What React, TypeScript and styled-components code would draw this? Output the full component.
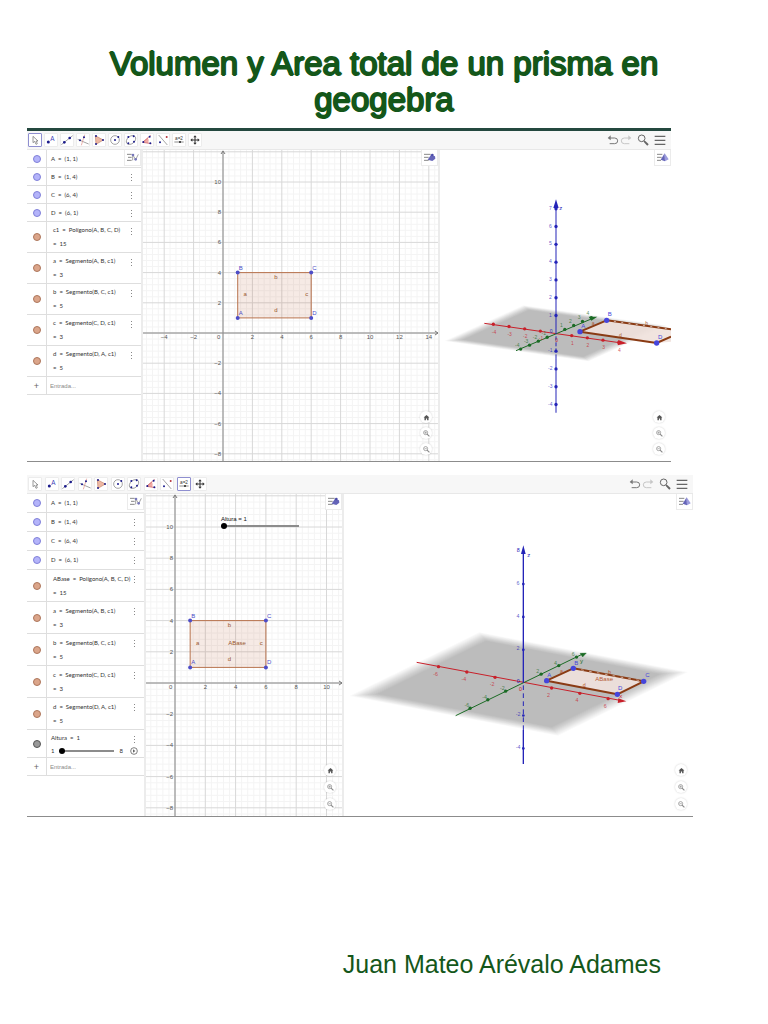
import React from "react";
import styled, { createGlobalStyle } from "styled-components";

const GlobalStyle = createGlobalStyle`
  *, *::before, *::after { box-sizing: border-box; }
  body { margin: 0; background: #fff; font-family: "Liberation Sans", Arial, sans-serif; }
  button, input { font: inherit; margin: 0; padding: 0; }
`;

const Page = styled.main`
  padding: 46px 75px 40px 27px;
`;

const Title = styled.h1`
  margin: 0 -48px 10px 0;
  padding: 0 48px;
  color: #14571a;
  font-size: 33px;
  font-weight: 400;
  line-height: 36px;
  text-align: center;
  text-shadow: 1px 0 #14571a, -1px 0 #14571a, 0 1px #14571a, 0 -1px #14571a;
`;

const Author = styled.p`
  margin: 132px 32px 0 0;
  color: #14571a;
  font-size: 25px;
  line-height: 30px;
  text-align: right;
`;

const Window = styled.section<{ $first?: boolean }>`
  margin: ${(p) => (p.$first ? "0 22px 13px 0" : "0")};
  border-top: ${(p) => (p.$first ? "3px solid #24483f" : "0")};
  border-bottom: 1px solid #8c8c8c;
`;

const Toolbar = styled.header`
  display: flex;
  justify-content: space-between;
  align-items: center;
  height: 19px;
  padding: 0 5px 0 1px;
  background: #f7f7f7;
  border-bottom: 1px solid #e8e8e8;
`;

const Tools = styled.div<{ $width: number }>`
  display: flex;
  justify-content: space-between;
  width: ${(p) => p.$width}px;
`;

const ToolButton = styled.button<{ $active?: boolean }>`
  display: flex;
  width: 14px;
  height: 14px;
  background: #fff;
  border: 1px solid ${(p) => (p.$active ? "#8f8fd0" : "#ececec")};
  border-radius: 1px;
  svg { display: block; width: 12px; height: 12px; overflow: visible; }
`;

const Actions = styled.div`
  display: flex;
  align-items: center;
  gap: 5px;
`;

const History = styled.div`
  display: flex;
  gap: 1px;
`;

const ActionButton = styled.button`
  display: flex;
  width: 12px;
  height: 12px;
  border: 0;
  background: none;
  svg { display: block; width: 12px; height: 12px; }
`;

const Views = styled.div<{ $cols: string; $height: number }>`
  display: grid;
  grid-template-columns: ${(p) => p.$cols};
  column-gap: 2px;
  min-height: ${(p) => p.$height}px;
  background: #ececec;
`;

const Algebra = styled.div`
  position: relative;
  background: #fff;
`;

const List = styled.ul`
  margin: 0;
  padding: 0;
  list-style: none;
`;

const Row = styled.li<{ $height: number }>`
  display: grid;
  grid-template-columns: 20px minmax(0, 1fr) 12px;
  height: ${(p) => p.$height}px;
  border-bottom: 1px solid #dedede;
`;

const Marker = styled.div`
  display: flex;
  align-items: center;
  justify-content: center;
  border-right: 1px solid #dedede;
  color: #666;
  font-size: 9px;
`;

const Visibility = styled.input<{ $fill: string; $line: string }>`
  appearance: none;
  width: 8px;
  height: 8px;
  border: 1px solid ${(p) => p.$line};
  border-radius: 50%;
  background: ${(p) => p.$fill};
`;

const Expression = styled.div<{ $indent?: boolean }>`
  display: flex;
  flex-direction: column;
  justify-content: center;
  padding-left: ${(p) => (p.$indent ? 6 : 4)}px;
  color: #333;
  font-family: Lato, "Liberation Sans", sans-serif;
  font-size: 6px;
  line-height: 14px;
  white-space: nowrap;
`;

const Formula = styled.span`
  display: flex;
  gap: 3px;
`;

const More = styled.button`
  align-self: start;
  width: 6px;
  height: 16px;
  border: 0;
  background: none;
  svg { display: block; width: 6px; height: 16px; }
`;

const Entry = styled.input`
  width: 100%;
  padding-left: 3px;
  border: 0;
  outline: 0;
  background: none;
  font-size: 6px;
  &::placeholder { color: #8a8a8a; opacity: 1; }
`;

const SliderLine = styled.div`
  display: flex;
  align-items: center;
  gap: 5px;
  height: 12px;
  margin-right: -10px;
  font-size: 6px;
`;

const Slider = styled.input<{ $width: number }>`
  appearance: none;
  display: block;
  width: ${(p) => p.$width}px;
  height: 6px;
  background: linear-gradient(#8c8c8c, #8c8c8c) center / 100% 2px no-repeat;
  &::-webkit-slider-thumb {
    appearance: none;
    width: 6px;
    height: 6px;
    border-radius: 50%;
    background: #000;
  }
`;

const Play = styled.button`
  display: flex;
  width: 8px;
  height: 8px;
  margin-left: 2px;
  border: 0;
  background: none;
  svg { width: 8px; height: 8px; }
`;

const View = styled.div`
  position: relative;
  overflow: hidden;
  background: #fff;
  > svg { display: block; width: 100%; height: 100%; }
`;

const StyleToggle = styled.button`
  position: absolute;
  top: 0;
  right: 0;
  display: flex;
  width: 17px;
  height: 16px;
  border: 1px solid #ebebeb;
  border-top: 0;
  background: #fff;
  svg { width: 15px; height: 15px; }
`;

const ZoomStack = styled.div<{ $gap: number }>`
  position: absolute;
  right: 6px;
  bottom: 6px;
  display: flex;
  flex-direction: column;
  gap: ${(p) => p.$gap}px;
`;

const ZoomButton = styled.button`
  display: flex;
  align-items: center;
  justify-content: center;
  width: 12px;
  height: 12px;
  border: 0;
  border-radius: 50%;
  background: #fff;
  box-shadow: 0 0 2px rgba(0, 0, 0, 0.2);
  svg { width: 7px; height: 7px; }
`;

const CanvasSlider = styled.label`
  position: absolute;
  top: 21px;
  left: 75px;
  display: block;
  color: #111;
  font-size: 6px;
  line-height: 8px;
`;

const NAVY = "#1c1c8c";

const Dot = ({ x, y, c = NAVY, r = 3 }: { x: number; y: number; c?: string; r?: number }) => (
  <circle cx={x} cy={y} r={r} fill={c} />
);

const tools: { name: string; art: React.ReactNode }[] = [
  { name: "Elige y mueve", art: <path d="M-6-11V8l5-4 4 9 4-2-4-8h6z" fill="#fff" stroke="#666" strokeWidth="2" /> },
  {
    name: "Punto",
    art: (
      <>
        <Dot x={-8} y={6} r={4.5} />
        <text x="-2" y="3" fontSize="19" fill="#3a3ab8">A</text>
      </>
    ),
  },
  {
    name: "Recta",
    art: (
      <>
        <path d="M-17 14L17-13" stroke="#777" strokeWidth="2" />
        <Dot x={-8} y={7} r={4} />
        <Dot x={8} y={-6} r={4} />
      </>
    ),
  },
  {
    name: "Perpendicular",
    art: (
      <>
        <path d="M-16-2L17 12" stroke="#777" strokeWidth="2" />
        <path d="M5-16L-5 16" stroke="#df8b84" strokeWidth="2" />
        <Dot x={-9} y={1} />
        <Dot x={3} y={-8} />
      </>
    ),
  },
  {
    name: "Polígono",
    art: (
      <>
        <path d="M-11-13L13 0-9 13z" fill="#edb8a4" stroke="#c48468" strokeWidth="2" />
        <Dot x={-9} y={-12} />
        <Dot x={12} y={0} />
        <Dot x={-9} y={12} />
      </>
    ),
  },
  {
    name: "Circunferencia",
    art: (
      <>
        <circle r="13" fill="none" stroke="#777" strokeWidth="2" />
        <Dot x={0} y={0} />
        <Dot x={10} y={-9} />
      </>
    ),
  },
  {
    name: "Elipse",
    art: (
      <>
        <ellipse rx="16" ry="11" transform="rotate(-40)" fill="none" stroke="#777" strokeWidth="2" />
        <Dot x={-8} y={-9} />
        <Dot x={8} y={-11} />
        <Dot x={-8} y={10} />
        <Dot x={9} y={5} />
      </>
    ),
  },
  {
    name: "Ángulo",
    art: (
      <>
        <path d="M-12 6L2-7Q8 0 4 9z" fill="#f0aaa5" />
        <path d="M11-14L-13 7 13 11" fill="none" stroke="#c33f45" strokeWidth="2" />
        <Dot x={8} y={-10} />
        <Dot x={-11} y={6} />
        <Dot x={10} y={10} />
      </>
    ),
  },
  {
    name: "Simetría",
    art: (
      <>
        <path d="M-13-15L13 15" stroke="#777" strokeWidth="2" />
        <Dot x={11} y={-9} c="#b5333a" />
        <Dot x={-9} y={7} />
      </>
    ),
  },
  {
    name: "Deslizador",
    art: (
      <>
        <text x="0" y="-1" textAnchor="middle" fontSize="14" fill="#333">a=2</text>
        <path d="M-14 6H14" stroke="#555" strokeWidth="2" />
        <Dot x={3} y={6} c="#222" />
      </>
    ),
  },
  {
    name: "Desplaza vista",
    art: (
      <g fill="#333">
        <path d="M-10-1.5H10V1.5H-10zM-1.5-10H1.5V10H-1.5z" />
        <path d="M0-14l5 6h-10zM0 14l5-6h-10zM-14 0l6-5v10zM14 0l-6-5v10z" />
      </g>
    ),
  },
];

const MagnifierIcon = ({ sign = "" }: { sign?: string }) => (
  <svg viewBox="0 0 24 24" fill="none" stroke="#888" strokeWidth="2.5">
    <circle cx="9" cy="9" r="7" />
    <path d="M14 14l8 8" strokeWidth="4" />
    {sign && <path d={sign} strokeWidth="2" />}
  </svg>
);

function AppToolbar({ active, width }: { active: number; width: number }) {
  return (
    <Toolbar>
      <Tools $width={width}>
        {tools.map((t, i) => (
          <ToolButton key={t.name} aria-label={t.name} $active={i === active}>
            <svg viewBox="-18 -18 36 36">{t.art}</svg>
          </ToolButton>
        ))}
      </Tools>
      <Actions>
        <History>
          <ActionButton aria-label="Deshacer">
            <svg viewBox="0 0 36 36" fill="none" stroke="#777" strokeWidth="3">
              <path d="M6 12H23q9 0 9 8.500t-9 8.500H8" />
              <path d="M11 4L2 12l9 7z" fill="#777" stroke="none" />
            </svg>
          </ActionButton>
          <ActionButton aria-label="Rehacer">
            <svg viewBox="0 0 36 36" fill="none" stroke="#c6c6c6" strokeWidth="3">
              <path d="M30 12H13q-9 0-9 8.500t9 8.500H28" />
              <path d="M25 4l9 8-9 7z" fill="#c6c6c6" stroke="none" />
            </svg>
          </ActionButton>
        </History>
        <ActionButton aria-label="Buscar">
          <svg viewBox="0 0 36 36" fill="none" stroke="#666">
            <circle cx="14" cy="13" r="10" strokeWidth="3" />
            <path d="M20 20l4 4" strokeWidth="3" />
            <path d="M23 23l10 10" strokeWidth="6" />
          </svg>
        </ActionButton>
        <ActionButton aria-label="Menú">
          <svg viewBox="0 0 36 36" stroke="#666" strokeWidth="4">
            <path d="M2 7H34M2 19H34M2 31H34" />
          </svg>
        </ActionButton>
      </Actions>
    </Toolbar>
  );
}

const toggleArt: Record<string, React.ReactNode> = {
  algebra: (
    <>
      <path d="M6 13H20M9 22H20M6 31H20" stroke="#888" strokeWidth="3" />
      <path d="M23 31V14l9 15L40 13" fill="none" stroke="#777" strokeWidth="2" />
      <Dot x={24} y={15} c="#7777bb" r={4} />
      <Dot x={32} y={28} c="#7777bb" r={4} />
    </>
  ),
  plane: (
    <>
      <path d="M6 13H26M6 22H20M6 31H20" stroke="#888" strokeWidth="3" />
      <path d="M17 29l10-15 12 5 1 7-9 7z" fill="#6464b8" />
      <Dot x={31} y={15} c="#4a4aa8" r={4} />
    </>
  ),
  space: (
    <>
      <path d="M6 13H22M6 22H20M6 31H18" stroke="#888" strokeWidth="3" />
      <path d="M29 10L17 29l13 5z" fill="#6464b8" />
      <path d="M29 10l12 18-11 6z" fill="#9c9cdd" />
    </>
  ),
};

const Toggle = ({ kind }: { kind: string }) => (
  <StyleToggle aria-label="Barra de estilo">
    <svg viewBox="0 0 45 45">{toggleArt[kind]}</svg>
  </StyleToggle>
);

const Zooms = ({ gap }: { gap: number }) => (
  <ZoomStack $gap={gap}>
    <ZoomButton aria-label="Vista estándar">
      <svg viewBox="0 0 24 24" fill="#555">
        <path d="M12 3L2 12h3v9h5v-6h4v6h5v-9h3z" />
      </svg>
    </ZoomButton>
    <ZoomButton aria-label="Acercar">
      <MagnifierIcon sign="M5 9H13M9 5V13" />
    </ZoomButton>
    <ZoomButton aria-label="Alejar">
      <MagnifierIcon sign="M5 9H13" />
    </ZoomButton>
  </ZoomStack>
);

const MoreButton = ({ name }: { name: string }) => (
  <More aria-label={`Opciones de ${name}`}>
    <svg viewBox="0 0 6 16" fill="#888">
      <path d="M2 6h1v1H2zM2 9h1v1H2zM2 12h1v1H2z" />
    </svg>
  </More>
);

const Equation = ({ left, right }: { left?: string; right: string | number }) => (
  <Formula>
    {left && <span>{left}</span>}
    <span>=</span>
    <span>{right}</span>
  </Formula>
);

interface AlgebraProps {
  base: string;
  pointHeight: number;
  commandHeight: number;
  slider?: boolean;
}

const points = [["A", "(1, 1)"], ["B", "(1, 4)"], ["C", "(6, 4)"], ["D", "(6, 1)"]];
const segments = [["a", "A, B", 3], ["b", "B, C", 5], ["c", "C, D", 3], ["d", "D, A", 5]];

function AlgebraView({ base, pointHeight, commandHeight, slider }: AlgebraProps) {
  const commands = [
    { name: base, text: "Polígono(A, B, C, D)", value: 15 },
    ...segments.map(([n, pts, v]) => ({ name: String(n), text: `Segmento(${pts}, c1)`, value: Number(v) })),
  ];
  return (
    <Algebra>
      <List>
        {points.map(([name, value], i) => (
          <Row key={name} $height={pointHeight}>
            <Marker>
              <Visibility type="checkbox" defaultChecked aria-label={`Mostrar ${name}`} $fill="#b4b4fa" $line="#8080d8" />
            </Marker>
            <Expression>
              <Equation left={name} right={value} />
            </Expression>
            {i > 0 && <MoreButton name={name} />}
          </Row>
        ))}
        {commands.map((c) => (
          <Row key={c.name} $height={commandHeight}>
            <Marker>
              <Visibility type="checkbox" defaultChecked aria-label={`Mostrar ${c.name}`} $fill="#dba58a" $line="#ad765c" />
            </Marker>
            <Expression $indent>
              <Equation left={c.name} right={c.text} />
              <Equation right={c.value} />
            </Expression>
            <MoreButton name={c.name} />
          </Row>
        ))}
        {slider && (
          <Row $height={28}>
            <Marker>
              <Visibility type="checkbox" defaultChecked aria-label="Mostrar Altura" $fill="#999" $line="#555" />
            </Marker>
            <Expression>
              <Equation left="Altura" right={1} />
              <SliderLine>
                <span>1</span>
                <Slider $width={55} type="range" min={1} max={8} defaultValue={1} aria-label="Altura" />
                <span>8</span>
                <Play aria-label="Reproducir">
                  <svg viewBox="0 0 24 24" fill="none" stroke="#666" strokeWidth="2.5">
                    <circle cx="12" cy="12" r="10" />
                    <path d="M9 7v10l7-5z" fill="#666" stroke="none" />
                  </svg>
                </Play>
              </SliderLine>
            </Expression>
            <MoreButton name="Altura" />
          </Row>
        )}
        <Row $height={18}>
          <Marker>+</Marker>
          <Entry placeholder="Entrada..." aria-label="Entrada" />
        </Row>
      </List>
      <Toggle kind="algebra" />
    </Algebra>
  );
}

interface PlaneProps {
  width: number;
  height: number;
  ox: number;
  oy: number;
  ux: number;
  uy: number;
  xs: number[];
  ys: number[];
  name?: string;
}

function PlaneChart({ width, height, ox, oy, ux, uy, xs, ys, name }: PlaneProps) {
  const X = (v: number) => ox + v * ux;
  const Y = (v: number) => oy - v * uy;
  const lines = (step: number, skip: boolean) => {
    let d = "";
    for (let i = -60; i <= 60; i++) {
      if (skip && i % 5 === 0) continue;
      const x = X(i * step);
      const y = Y(i * step);
      if (x > 0 && x < width) d += `M${x} 0V${height}`;
      if (y > 0 && y < height) d += `M0 ${y}H${width}`;
    }
    return d;
  };
  return (
    <svg viewBox={`0 0 ${width} ${height}`} preserveAspectRatio="xMinYMin slice" fontSize="6">
      <path d={lines(0.4, true)} stroke="#f4f4f4" />
      <path d={lines(2, false)} stroke="#d8d8d8" />
      <path d={`M0 ${oy}H${width}M${ox} ${height}V2`} stroke="#8c8c8c" />
      <path d={`M${width - 3} ${oy - 2}l3 2-3 2M${ox - 2} 4l2-3 2 3`} fill="none" stroke="#777" />
      <g fill="#555">
        {xs.map((v) => (
          <text key={v} x={X(v)} y={oy + 6} textAnchor="middle">{v < 0 ? `−${-v}` : v}</text>
        ))}
        {ys.map((v) => (
          <text key={v} x={ox - 2} y={Y(v) + 2} textAnchor="end">{v < 0 ? `−${-v}` : v}</text>
        ))}
        <text x={ox - 6} y={oy + 6}>0</text>
      </g>
      <rect x={X(1)} y={Y(4)} width={5 * ux} height={3 * uy} fill="#b5532a" fillOpacity="0.12" stroke="#b9744f" />
      <g fill="#99582f" textAnchor="middle">
        <text x={X(3.6)} y={Y(4) + 6}>b</text>
        <text x={X(3.6)} y={Y(1) - 6}>d</text>
        <text x={X(1.5)} y={Y(2.5) + 1}>a</text>
        <text x={X(5.7)} y={Y(2.5) + 1}>c</text>
        {name && <text x={X(4.1)} y={Y(2.5) + 1}>{name}</text>}
      </g>
      <g fill="#4d4dc8">
        {[["A", 1, 1], ["B", 1, 4], ["C", 6, 4], ["D", 6, 1]].map(([n, x, y]) => (
          <g key={n}>
            <circle cx={X(+x)} cy={Y(+y)} r="2" />
            <text x={X(+x) + 1} y={Y(+y) - 3}>{n}</text>
          </g>
        ))}
      </g>
    </svg>
  );
}

type P = [number, number];

/* Ground plane whose edges fade out: nested translucent copies, each a little smaller. */
function Ground({ corners, center }: { corners: P[]; center: P }) {
  return (
    <g fill="#000" fillOpacity="0.024">
      {Array.from({ length: 12 }, (_, i) => {
        const k = 1 - i * 0.015;
        const pts = corners.map(([x, y]) => [center[0] + (x - center[0]) * k, center[1] + (y - center[1]) * k].join());
        return <polygon key={i} points={pts.join(" ")} />;
      })}
    </g>
  );
}

interface Tick { x: number; y: number; t: string; }

function Ticks({ items, color, dx, dy, r = 5 }: { items: Tick[]; color: string; dx: number; dy: number; r?: number }) {
  return (
    <g fill={color}>
      {items.map((k) => (
        <g key={k.t + k.x + k.y}>
          <circle cx={k.x} cy={k.y} r={r} />
          <text x={k.x + dx} y={k.y + dy} textAnchor="middle" fillOpacity="0.75">{k.t}</text>
        </g>
      ))}
    </g>
  );
}

const ticks = (origin: P, step: P, values: number[]): Tick[] =>
  values.map((v) => ({ x: origin[0] + step[0] * v, y: origin[1] + step[1] * v, t: String(v) }));

const RED = "#c8202a";
const GREEN = "#1b6b25";
const BLUE = "#2424b8";
const BROWN = "#8a3b14";

function SpaceOne() {
  const o: P = [348, 640];
  return (
    <svg viewBox="0 90 693 933" preserveAspectRatio="xMidYMin slice" fontSize="15">
      <Ground center={o} corners={[[13, 663], [250, 556], [683, 617], [446, 724]]} />
      <polygon points="420,635 500,601 860,652 650,669" fill="#efe1dc" fillOpacity="0.9" />
      <path d="M133 610L545 669" stroke={RED} strokeWidth="3" />
      <path d="M535 660l26 10-28 6z" fill={RED} />
      <path d="M228 692L456 596" stroke={GREEN} strokeWidth="3" />
      <path d="M446 590l26 0-18 12z" fill={GREEN} />
      <path d="M348 878V715M348 640V256" stroke={BLUE} strokeWidth="4" strokeOpacity="0.75" />
      <path d="M348 715V640" stroke={BLUE} strokeWidth="3" strokeDasharray="12 6" />
      <path d="M340 264l8-26 8 26z" fill={BLUE} />
      <Ticks items={ticks(o, [47, 6.8], [-4, -3, -2, -1, 1, 2, 3, 4])} color={RED} dx={2} dy={28} />
      <Ticks items={ticks(o, [26.5, -11.8], [-4, -3, -2, -1, 1, 2, 3, 4])} color={GREEN} dx={-10} dy={-7} />
      <Ticks items={ticks(o, [0, -53.4], [-4, -3, -2, -1, 1, 2, 3, 4, 5, 6, 7])} color={BLUE} dx={-17} dy={3} />
      <text x="329" y="640" fill={BLUE}>0</text>
      <text x="346" y="666" fill={RED}>0</text>
      <text x="358" y="271" fontSize="18" fill={BLUE}>z</text>
      <path d="M693 650L650 669 420 635 500 601 693 628" fill="none" stroke={BROWN} strokeWidth="6" strokeLinejoin="round" />
      <path d="M500 601L693 628" stroke="#efe1dc" strokeWidth="2" strokeDasharray="6 16" />
      <g fill="#a85a34">
        <text x="616" y="616">b</text>
        <text x="537" y="650">d</text>
        <text x="455" y="616">a</text>
      </g>
      <g fill="#4545dc" fontSize="18">
        <circle cx="420" cy="635" r="8" />
        <circle cx="500" cy="601" r="8" />
        <circle cx="650" cy="669" r="8" />
        <text x="424" y="624">A</text>
        <text x="503" y="589">B</text>
        <text x="654" y="657">D</text>
      </g>
    </svg>
  );
}

function SpaceTwo() {
  const o: P = [550, 638];
  return (
    <svg viewBox="12 72 1047 966" preserveAspectRatio="xMidYMin slice" fontSize="16">
      <Ground center={[536, 642]} corners={[[28, 678], [418, 487], [1044, 606], [654, 797]]} />
      <polygon points="620,632 700,595 911,634 832,673" fill="#efe1dc" fillOpacity="0.92" />
      <path d="M230 577L840 691" stroke={RED} strokeWidth="3" />
      <path d="M835 685l24 9-26 5z" fill={RED} />
      <path d="M347 737L728 552" stroke={GREEN} strokeWidth="3" />
      <path d="M720 550l19-1-11 12z" fill={GREEN} stroke={GREEN} />
      <path d="M550 882V780M550 638V250" stroke={BLUE} strokeWidth="4" />
      <path d="M550 780V638" stroke={BLUE} strokeWidth="3" strokeDasharray="14 10" />
      <path d="M543 252l7-26 7 26z" fill={BLUE} />
      <Ticks items={ticks(o, [42.4, 8], [-6, -4, -2, 2, 4, 6])} color={RED} dx={-9} dy={27} />
      <Ticks items={ticks(o, [26.6, -12.8], [-6, -4, -2, 2, 4, 6])} color={GREEN} dx={-10} dy={-3} />
      <Ticks items={ticks(o, [0, -49.3], [-4, -2, 2, 4, 6])} color={BLUE} dx={-16} dy={2} r={4} />
      <text x="530" y="245" fill={BLUE}>8</text>
      <text x="530" y="638" fill={BLUE}>0</text>
      <text x="537" y="662" fill={RED}>0</text>
      <text x="562" y="262" fontSize="18" fill={BLUE}>z</text>
      <text x="720" y="579" fontSize="18" fill={GREEN}>y</text>
      <text x="838" y="684" fontSize="18" fill={RED}>x</text>
      <path d="M620 632L700 595 911 634 832 673z" fill="none" stroke={BROWN} strokeWidth="6" strokeLinejoin="round" />
      <path d="M700 595L911 634" stroke="#efe1dc" strokeWidth="2" strokeDasharray="8 16" />
      <g fill="#b55a34">
        <text x="766" y="634" fontSize="18">ABase</text>
        <text x="804" y="611">b</text>
        <text x="728" y="650">d</text>
        <text x="660" y="610">a</text>
      </g>
      <g fill="#4545dc" fontSize="18">
        <circle cx="620" cy="632" r="8" />
        <circle cx="700" cy="595" r="8" />
        <circle cx="911" cy="634" r="8" />
        <circle cx="832" cy="673" r="8" />
        <text x="622" y="620">A</text>
        <text x="703" y="585">B</text>
        <text x="916" y="622">C</text>
        <text x="834" y="660">D</text>
      </g>
    </svg>
  );
}

export default function App() {
  return (
    <>
      <GlobalStyle />
      <Page>
        <Title>Volumen y Area total de un prisma en geogebra</Title>

        <Window $first aria-label="Polígono base">
          <AppToolbar active={0} width={174} />
          <Views $cols="114px minmax(0, 295fr) minmax(0, 231fr)" $height={311}>
            <AlgebraView base="c1" pointHeight={18} commandHeight={31} />
            <View>
              <PlaneChart
                width={295} height={311} ox={80} oy={183} ux={14.7} uy={15.1}
                xs={[-4, -2, 2, 4, 6, 8, 10, 12, 14]}
                ys={[10, 8, 6, 4, 2, -2, -4, -6, -8]}
              />
              <Toggle kind="plane" />
              <Zooms gap={4} />
            </View>
            <View>
              <SpaceOne />
              <Toggle kind="space" />
              <Zooms gap={4} />
            </View>
          </Views>
        </Window>

        <Window aria-label="Deslizador de altura">
          <AppToolbar active={9} width={179} />
          <Views $cols="117px minmax(0, 196fr) minmax(0, 349fr)" $height={322}>
            <AlgebraView base="ABase" pointHeight={19} commandHeight={32} slider />
            <View>
              <PlaneChart
                width={196} height={322} ox={29} oy={189} ux={15.15} uy={15.6}
                xs={[2, 4, 6, 8, 10]}
                ys={[10, 8, 6, 4, 2, -2, -4, -6, -8]}
                name="ABase"
              />
              <CanvasSlider>
                Altura = 1
                <Slider $width={78} type="range" min={1} max={8} defaultValue={1} />
              </CanvasSlider>
              <Toggle kind="plane" />
              <Zooms gap={5} />
            </View>
            <View>
              <SpaceTwo />
              <Toggle kind="space" />
              <Zooms gap={5} />
            </View>
          </Views>
        </Window>

        <Author>Juan Mateo Arévalo Adames</Author>
      </Page>
    </>
  );
}
